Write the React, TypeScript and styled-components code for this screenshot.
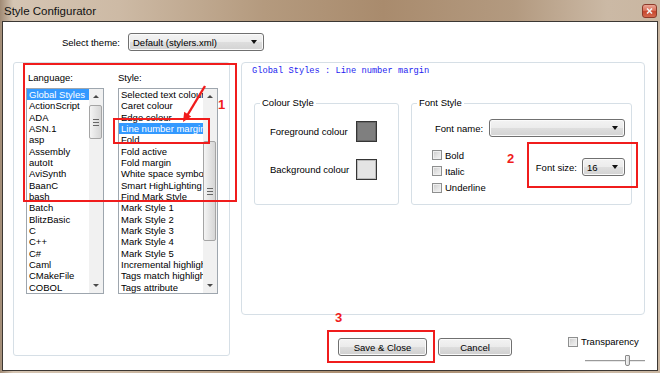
import React from "react";
import styled, { createGlobalStyle } from "styled-components";

const GlobalStyle = createGlobalStyle`
  html, body {
    margin: 0;
    padding: 0;
    background: #fff;
  }
  body {
    font-family: "Liberation Sans", Arial, sans-serif;
    font-size: 9.5px;
    color: #000;
  }
`;

const RED = "#f01c1c";

const languages = [
  "Global Styles", "ActionScript", "ADA", "ASN.1", "asp", "Assembly", "autoIt",
  "AviSynth", "BaanC", "bash", "Batch", "BlitzBasic", "C", "C++", "C#", "Caml",
  "CMakeFile", "COBOL",
];

const styles = [
  "Selected text colour", "Caret colour", "Edge colour", "Line number margin",
  "Fold", "Fold active", "Fold margin", "White space symbol", "Smart HighLighting",
  "Find Mark Style", "Mark Style 1", "Mark Style 2", "Mark Style 3", "Mark Style 4",
  "Mark Style 5", "Incremental highlighting", "Tags match highlighting", "Tags attribute",
];

const Frame = styled.div`
  position: relative;
  width: 660px;
  height: 373px;
  overflow: hidden;
  background: linear-gradient(
    to right,
    #a08a74 0%,
    #d5c5b3 2%,
    #cdbaa5 18%,
    #b49a7e 40%,
    #a98b6d 58%,
    #b39a80 78%,
    #cbb9a5 92%,
    #c9b6a1 100%
  );
`;

const TitleBar = styled.div`
  height: 21px;
  display: flex;
  align-items: center;
  padding: 0 3px 0 4px;
`;

const Title = styled.span`
  flex: 1;
  font-size: 11.5px;
  color: #111;
`;

const CloseButton = styled.div`
  box-sizing: border-box;
  width: 15px;
  height: 14px;
  border: 1px solid #8d3a2a;
  border-radius: 3px;
  background: linear-gradient(#eaa695 0%, #d9705a 45%, #c6452c 55%, #d4694e 100%);
  display: flex;
  align-items: center;
  justify-content: center;
`;

const Client = styled.div`
  box-sizing: border-box;
  width: 656px;
  height: 350px;
  margin-left: 2px;
  border: 1px solid #3b3733;
  background: #fff;
`;

const ThemeRow = styled.div`
  display: flex;
  align-items: center;
  gap: 8px;
  margin-top: 11px;
`;

const ThemeLabel = styled.span`
  width: 117px;
  text-align: right;
`;

const Combo = styled.div<{ $w: number }>`
  box-sizing: border-box;
  width: ${(p) => p.$w}px;
  height: 18px;
  border: 1px solid #707070;
  border-radius: 3px;
  background: linear-gradient(#f3f3f3 0%, #ececec 48%, #dedede 52%, #d3d3d3 100%);
  box-shadow: inset 0 0 0 1px #fafafa;
  display: flex;
  align-items: center;
  padding: 0 6px 0 4px;

  &::after {
    content: "";
    margin-left: auto;
    border-left: 3.5px solid transparent;
    border-right: 3.5px solid transparent;
    border-top: 4px solid #111;
  }
`;

const MainRow = styled.div`
  display: flex;
  gap: 11px;
  margin-top: 11px;
  padding-left: 10px;
`;

const LeftGroup = styled.div`
  box-sizing: border-box;
  width: 217px;
  height: 294px;
  border: 1px solid #d6dfe6;
  border-radius: 3px;
  padding: 9px 0 0 12px;
  display: flex;
  gap: 14px;
`;

const ListColumn = styled.div`
  display: flex;
  flex-direction: column;
  gap: 4px;
`;

const ListLabel = styled.span<{ $indent: number }>`
  line-height: 12px;
  padding-left: ${(p) => p.$indent}px;
`;

const ListBox = styled.div<{ $w: number }>`
  box-sizing: border-box;
  width: ${(p) => p.$w}px;
  height: 206px;
  border: 1px solid #9ea6ae;
  display: flex;
  background: #fff;
`;

const Items = styled.div`
  flex: 1;
  min-width: 0;
  overflow: hidden;
`;

const Item = styled.div<{ $sel?: boolean }>`
  height: 11.33px;
  line-height: 11.33px;
  padding-left: 2px;
  white-space: nowrap;
  background: ${(p) => (p.$sel ? "#3399ff" : "transparent")};
  color: ${(p) => (p.$sel ? "#fff" : "#000")};
`;

const ScrollBar = styled.div`
  width: 14px;
  display: flex;
  flex-direction: column;
  background: #f1f1f1;
`;

const ScrollArrow = styled.div<{ $dir: "up" | "down" }>`
  height: 15px;
  display: flex;
  align-items: center;
  justify-content: center;

  &::before {
    content: "";
    border-left: 3px solid transparent;
    border-right: 3px solid transparent;
    ${(p) =>
      p.$dir === "up" ? "border-bottom: 3px solid #4a4a4a;" : "border-top: 3px solid #4a4a4a;"}
  }
`;

const Track = styled.div`
  flex: 1;
`;

const Thumb = styled.div<{ $top: number; $h: number }>`
  box-sizing: border-box;
  margin: ${(p) => p.$top}px 1px 0 0;
  height: ${(p) => p.$h}px;
  border: 1px solid #a5a5a5;
  border-radius: 2px;
  background: linear-gradient(to right, #f4f4f4, #e3e3e3 55%, #d6d6d6);
  display: flex;
  align-items: center;
  justify-content: center;

  &::before {
    content: "";
    width: 6px;
    height: 7px;
    background: repeating-linear-gradient(#666 0 1px, transparent 1px 3px);
  }
`;

const RightColumn = styled.div`
  width: 404px;
  display: flex;
  flex-direction: column;
`;

const Panel = styled.div`
  box-sizing: border-box;
  height: 253px;
  border: 1px solid #d6dfe6;
  border-radius: 4px;
  padding: 3px 0 0 10px;
`;

const StyleDesc = styled.div`
  font-family: "Liberation Mono", "Courier New", monospace;
  font-size: 8.7px;
  line-height: 10px;
  color: #1c1cf0;
  white-space: pre;
`;

const Groups = styled.div`
  display: flex;
  gap: 12px;
  margin: 21px 0 0 2px;
`;

const Group = styled.fieldset<{ $w: number }>`
  box-sizing: border-box;
  width: ${(p) => p.$w}px;
  height: 108px;
  min-width: 0;
  margin: 0;
  padding: 0;
  border: 1px solid #d6dfe6;
  border-radius: 3px;
`;

const Legend = styled.legend`
  margin-left: 5px;
  padding: 0 2px;
  line-height: 12px;
`;

const ColourGrid = styled.div`
  display: grid;
  grid-template-columns: 86px 21px;
  row-gap: 17px;
  align-items: center;
  padding: 12px 0 0 15px;
`;

const Swatch = styled.div<{ $c: string }>`
  box-sizing: border-box;
  width: 21px;
  height: 21px;
  border: 1px solid #353535;
  box-shadow: inset 0 0 0 1px rgba(0, 0, 0, 0.18);
  background: ${(p) => p.$c};
`;

const FontNameRow = styled.div`
  display: flex;
  align-items: center;
  padding: 10px 0 0 23px;
`;

const FieldLabel = styled.span<{ $w?: number }>`
  ${(p) => (p.$w ? `width: ${p.$w}px;` : "")}
  white-space: nowrap;
`;

const FontOptions = styled.div`
  display: flex;
  justify-content: space-between;
  align-items: flex-start;
  padding: 10px 6px 0 20px;
`;

const CheckList = styled.div`
  display: flex;
  flex-direction: column;
`;

const CheckRow = styled.div<{ $h?: number }>`
  display: flex;
  align-items: center;
  gap: 3px;
  height: ${(p) => p.$h ?? 16.3}px;
`;

const Check = styled.span`
  box-sizing: border-box;
  width: 10px;
  height: 10px;
  border: 1px solid #8e8f8f;
  background: linear-gradient(135deg, #c9c9c9 0%, #e4e4e4 55%, #f3f3f3 100%);
  box-shadow: inset 0 0 0 1px #efefef;
`;

const SizeRow = styled.div`
  display: flex;
  align-items: center;
  gap: 5px;
  margin-top: 11px;
`;

const ButtonBar = styled.div`
  display: flex;
  align-items: flex-start;
  margin-top: 21px;
  padding-left: 97px;
`;

const Button = styled.button<{ $w: number; $gap?: number }>`
  box-sizing: border-box;
  width: ${(p) => p.$w}px;
  height: 18px;
  margin: 2px 0 0 ${(p) => p.$gap ?? 0}px;
  padding: 0;
  border: 1px solid #707070;
  border-radius: 3px;
  background: linear-gradient(#f3f3f3 0%, #ebebeb 48%, #dddddd 52%, #cfcfcf 100%);
  box-shadow: inset 0 0 0 1px #fbfbfb;
  font-family: "Liberation Sans", Arial, sans-serif;
  font-size: 9.5px;
  color: #000;
`;

const TransBox = styled.div`
  margin-left: auto;
  width: 77px;
  display: flex;
  flex-direction: column;
`;

const Slider = styled.div`
  position: relative;
  width: 60px;
  height: 11px;
  margin: 8px 0 0 17px;

  &::before {
    content: "";
    position: absolute;
    left: 0;
    right: 0;
    top: 5px;
    height: 1px;
    background: #9a9a9a;
    box-shadow: 0 1px 0 #e8e8e8;
  }
`;

const SliderThumb = styled.div`
  position: absolute;
  left: 40px;
  top: 0;
  box-sizing: border-box;
  width: 5px;
  height: 11px;
  border: 1px solid #8a8a8a;
  border-radius: 1px 1px 2px 2px;
  background: linear-gradient(to right, #f6f6f6, #dadada);
`;

const Mark = styled.div<{ $x: number; $y: number; $w: number; $h: number }>`
  position: absolute;
  left: ${(p) => p.$x}px;
  top: ${(p) => p.$y}px;
  width: ${(p) => p.$w}px;
  height: ${(p) => p.$h}px;
  box-sizing: border-box;
  border: 2px solid ${RED};
  pointer-events: none;
`;

const Num = styled.span<{ $x: number; $y: number }>`
  position: absolute;
  left: ${(p) => p.$x}px;
  top: ${(p) => p.$y}px;
  font-family: "Liberation Sans", Arial, sans-serif;
  font-weight: bold;
  font-size: 13px;
  line-height: 13px;
  color: ${RED};
`;

const Overlay = styled.svg`
  position: absolute;
  left: 0;
  top: 0;
  pointer-events: none;
`;

function List({
  items,
  width,
  selected,
  thumbTop,
  thumbH,
}: {
  items: string[];
  width: number;
  selected: number;
  thumbTop: number;
  thumbH: number;
}) {
  return (
    <ListBox $w={width}>
      <Items>
        {items.map((it, i) => (
          <Item key={it} $sel={i === selected}>
            {it}
          </Item>
        ))}
      </Items>
      <ScrollBar>
        <ScrollArrow $dir="up" />
        <Track>
          <Thumb $top={thumbTop} $h={thumbH} />
        </Track>
        <ScrollArrow $dir="down" />
      </ScrollBar>
    </ListBox>
  );
}

export default function App() {
  return (
    <Frame>
      <GlobalStyle />
      <TitleBar>
        <Title>Style Configurator</Title>
        <CloseButton>
          <svg width="7" height="6" viewBox="0 0 7 6">
            <path d="M1 0.5 L6 5.5 M6 0.5 L1 5.5" stroke="#f4f0f0" strokeWidth="1.6" />
          </svg>
        </CloseButton>
      </TitleBar>

      <Client>
        <ThemeRow>
          <ThemeLabel>Select theme:</ThemeLabel>
          <Combo $w={136}>
            <span>Default (stylers.xml)</span>
          </Combo>
        </ThemeRow>

        <MainRow>
          <LeftGroup>
            <ListColumn>
              <ListLabel $indent={2}>Language:</ListLabel>
              <List items={languages} width={78} selected={0} thumbTop={1} thumbH={34} />
            </ListColumn>
            <ListColumn>
              <ListLabel $indent={0}>Style:</ListLabel>
              <List items={styles} width={100} selected={3} thumbTop={37} thumbH={100} />
            </ListColumn>
          </LeftGroup>

          <RightColumn>
            <Panel>
              <StyleDesc>Global Styles : Line number margin</StyleDesc>
              <Groups>
                <Group $w={145}>
                  <Legend>Colour Style</Legend>
                  <ColourGrid>
                    <span>Foreground colour</span>
                    <Swatch $c="#7f7f7f" />
                    <span>Background colour</span>
                    <Swatch $c="#e4e4e4" />
                  </ColourGrid>
                </Group>
                <Group $w={221}>
                  <Legend>Font Style</Legend>
                  <FontNameRow>
                    <FieldLabel $w={54}>Font name:</FieldLabel>
                    <Combo $w={136} />
                  </FontNameRow>
                  <FontOptions>
                    <CheckList>
                      <CheckRow>
                        <Check />
                        <span>Bold</span>
                      </CheckRow>
                      <CheckRow>
                        <Check />
                        <span>Italic</span>
                      </CheckRow>
                      <CheckRow>
                        <Check />
                        <span>Underline</span>
                      </CheckRow>
                    </CheckList>
                    <SizeRow>
                      <FieldLabel>Font size:</FieldLabel>
                      <Combo $w={43}>
                        <span>16</span>
                      </Combo>
                    </SizeRow>
                  </FontOptions>
                </Group>
              </Groups>
            </Panel>

            <ButtonBar>
              <Button $w={89}>Save &amp; Close</Button>
              <Button $w={74} $gap={11}>
                Cancel
              </Button>
              <TransBox>
                <CheckRow $h={11}>
                  <Check />
                  <span>Transparency</span>
                </CheckRow>
                <Slider>
                  <SliderThumb />
                </Slider>
              </TransBox>
            </ButtonBar>
          </RightColumn>
        </MainRow>
      </Client>

      <Mark $x={23} $y={63} $w={214} $h={139} />
      <Mark $x={113} $y={118} $w={97} $h={26} />
      <Mark $x={527} $y={142} $w={111} $h={46} />
      <Mark $x={327} $y={330} $w={108} $h={33} />
      <Num $x={218} $y={98}>1</Num>
      <Num $x={507} $y={152}>2</Num>
      <Num $x={335} $y={311}>3</Num>
      <Overlay width="660" height="373" viewBox="0 0 660 373">
        <line x1="205" y1="86" x2="187.5" y2="115" stroke={RED} strokeWidth="2.4" />
        <polygon points="183,122 191.2,116.4 184.2,111.8" fill={RED} />
      </Overlay>
    </Frame>
  );
}
